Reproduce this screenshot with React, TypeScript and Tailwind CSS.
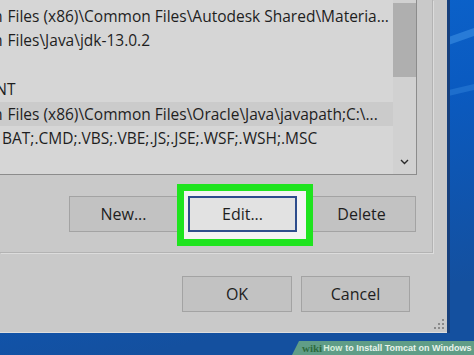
import React from "react"

// Environment Variables dialog, zoomed & cropped (wikiHow style screenshot)

const rows = [
  { clip: "", text: "", selected: false },
  { clip: "C:\\Program", text: "Files (x86)\\Common Files\\Autodesk Shared\\Materia...", selected: false },
  { clip: "C:\\Program", text: "Files\\Java\\jdk-13.0.2", selected: false },
  { clip: "", text: "", selected: false },
  { clip: "", text: "", nt: true, selected: false },
  { clip: "C:\\Program", text: "Files (x86)\\Common Files\\Oracle\\Java\\javapath;C:\\...", selected: true },
  { clip: "", text: "BAT;.CMD;.VBS;.VBE;.JS;.JSE;.WSF;.WSH;.MSC", selected: false, pad: true },
  { clip: "", text: "", selected: false },
]

function Wallpaper() {
  return (
    <svg className="absolute inset-0" width="474" height="355" viewBox="0 0 474 355">
      <defs>
        <linearGradient id="wp" x1="0" y1="0" x2="0.3" y2="1">
          <stop offset="0" stopColor="#0c68d2" />
          <stop offset="0.5" stopColor="#0a5ac0" />
          <stop offset="1" stopColor="#14509f" />
        </linearGradient>
      </defs>
      <rect width="474" height="355" fill="url(#wp)" />
      <polygon points="440,40 474,28 474,36 440,48" fill="#3c8fe2" opacity="0.6" />
      <polygon points="440,92 474,84 474,90 440,98" fill="#2f82da" opacity="0.5" />
    </svg>
  )
}

function Button({ label, className = "" }: { label: string; className?: string }) {
  return (
    <div
      className={`flex items-center justify-center h-[36px] border border-[#a3a3a3] bg-[#c2c2c2] text-[16px] text-[#1e1e1e] ${className}`}
    >
      {label}
    </div>
  )
}

export default function App() {
  return (
    <div className="relative w-[474px] h-[355px] overflow-hidden font-['Open_Sans',sans-serif]">
      <Wallpaper />

      {/* Dialog */}
      <div className="relative w-[447px] h-[333px] flex flex-col bg-[#c9c9c9] border-b border-[#dedede] shadow-[3px_0_0_#17407c]">
        {/* System variables group */}
        <div className="w-[433px] h-[253px] flex flex-col border-r border-b border-[#b3b3b3] shadow-[1px_1px_0_#dcdcdc]">
          {/* Listbox */}
          <div className="w-[417px] h-[175px] flex border-r border-b border-[#8c8c8c] bg-[#d6d6d6] overflow-hidden shrink-0">
            <div className="flex-1 flex flex-col -mt-[20px] text-[15.5px] text-[#1e1e1e] overflow-hidden">
              {rows.map((r, i) => (
                <div
                  key={i}
                  className={`flex items-center h-[24.4px] shrink-0 whitespace-nowrap ${r.selected ? "bg-[#cbcbcb]" : ""}`}
                >
                  {r.clip && (
                    <span className="w-[2.5px] flex justify-end overflow-hidden shrink-0">
                      <span className="shrink-0">{r.clip}</span>
                    </span>
                  )}
                  {r.nt && (
                    <span className="w-[15.5px] flex justify-end overflow-hidden shrink-0">
                      <span className="shrink-0">Windows_NT</span>
                    </span>
                  )}
                  {r.text && <span className={r.clip ? "ml-[5px]" : r.pad ? "ml-[2px]" : ""}>{r.text}</span>}
                </div>
              ))}
            </div>
            {/* Scrollbar */}
            <div className="w-[23px] flex flex-col items-center bg-[#d1d1d1] shrink-0">
              <div className="mt-[3px] w-full h-[74px] bg-[#afafaf]" />
              <svg className="mt-auto mb-[9px]" width="9" height="6" viewBox="0 0 9 6">
                <path d="M1 1 L4.5 4.5 L8 1" fill="none" stroke="#2a2a2a" strokeWidth="1.4" />
              </svg>
            </div>
          </div>

          {/* New / Edit / Delete */}
          <div className="relative flex justify-end gap-[10px] mt-[21px] pr-[16px]">
            <Button label="New..." className="w-[109px]" />
            <div className="absolute left-[177px] top-[-12px] w-[136px] h-[62px] border-[7px] border-[#1fe41f] bg-[#f3f3f3] z-10" />
            <div className="relative z-20 flex items-center justify-center w-[109px] h-[36px] border-2 border-[#2e4d8c] bg-[#e2e2e2] text-[16px] text-[#1e1e1e]">
              Edit...
            </div>
            <Button label="Delete" className="w-[109px]" />
          </div>
        </div>

        {/* OK / Cancel */}
        <div className="flex justify-end gap-[9px] mt-[23px] pr-[37px]">
          <Button label="OK" className="w-[110px]" />
          <Button label="Cancel" className="w-[109px]" />
        </div>

        {/* Resize grip */}
        <div className="absolute right-[3px] bottom-[3px] grid grid-cols-3 gap-[2px]">
          {[0, 0, 1, 0, 1, 1, 1, 1, 1].map((d, i) => (
            <span key={i} className={`w-[2px] h-[2px] ${d ? "bg-[#8a8a8a]" : ""}`} />
          ))}
        </div>
      </div>

      {/* wikiHow banner */}
      <div className="absolute right-0 bottom-0 w-[182px] h-[14px] bg-[#68a584]/90 [clip-path:polygon(7px_0,100%_0,100%_100%,0_100%)] flex items-center pl-[10px] whitespace-nowrap">
        <span className="font-['Liberation_Serif',serif] font-bold text-[11px] text-[#2e6a3d] leading-none">wiki</span>
        <span className="font-['Liberation_Sans',sans-serif] font-bold text-[9px] text-[#d8efdc] leading-none ml-[1px]">How</span>
        <span className="font-['Liberation_Sans',sans-serif] font-bold text-[9px] text-[#e9f3ec] leading-none ml-[3px]">to Install Tomcat on Windows</span>
      </div>
    </div>
  )
}
